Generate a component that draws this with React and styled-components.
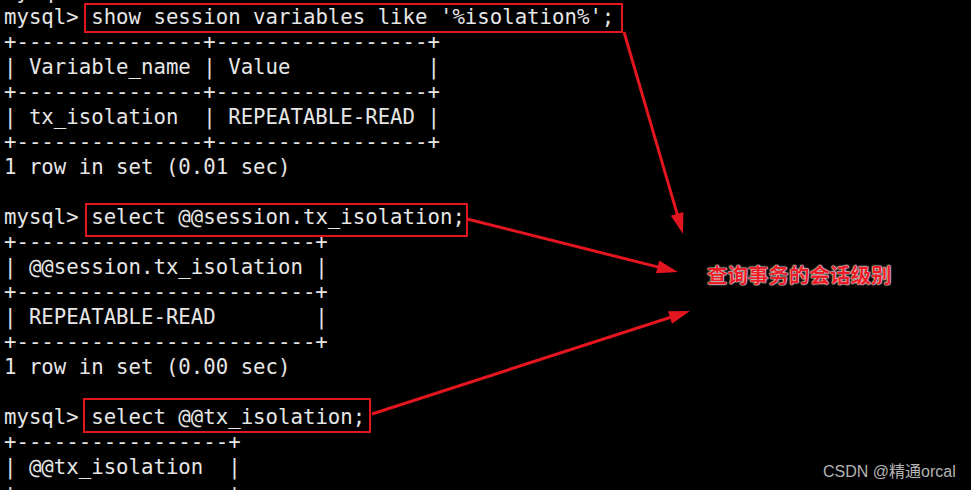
import React from 'react';
import styled, { createGlobalStyle } from 'styled-components';

const Global = createGlobalStyle`
  html, body {
    margin: 0;
    padding: 0;
    background: #000;
  }
`;

const Screen = styled.div`
  position: relative;
  width: 971px;
  height: 490px;
  overflow: hidden;
  background: #000;
`;

const Terminal = styled.div`
  margin-top: -20px;
  padding-left: 4px;
  font-family: 'DejaVu Sans Mono', 'Liberation Mono', monospace;
  font-size: 20.7px;
  line-height: 25px;
  color: #e6e6e6;
`;

const Line = styled.div`
  height: 25px;
  white-space: pre;
`;

const Cmd = styled.span`
  position: relative;
  display: inline-block;
  height: 25px;
  vertical-align: top;
  &::after {
    content: '';
    position: absolute;
    top: ${p => p.$box.t}px;
    right: ${p => p.$box.r}px;
    bottom: ${p => p.$box.b}px;
    left: ${p => p.$box.l}px;
    border: 2.5px solid #e3161f;
  }
`;

const Arrows = styled.svg`
  position: absolute;
  left: 0;
  top: 0;
  pointer-events: none;
`;

const Label = styled.div`
  position: absolute;
  left: 707px;
  top: 264px;
  font-family: 'Noto Sans CJK SC', sans-serif;
  font-weight: 700;
  font-size: 20.5px;
  line-height: 1;
  color: #ee1c26;
  text-shadow: 0 0 1px #fff, 0 0 1.5px #fff, 0 0 2px rgba(255, 255, 255, 0.8);
`;

const Watermark = styled.div`
  position: absolute;
  left: 823px;
  top: 462px;
  font-family: 'Liberation Sans', 'Noto Sans CJK SC', sans-serif;
  font-size: 16px;
  line-height: 20px;
  color: #b4b4b4;
  white-space: nowrap;
`;

const lines = [
  { text: 'mysql> ' },
  { text: 'mysql> ', cmd: "show session variables like '%isolation%';", box: { t: -2, r: -9, b: -3, l: -7 } },
  { text: '+---------------+-----------------+' },
  { text: '| Variable_name | Value           |' },
  { text: '+---------------+-----------------+' },
  { text: '| tx_isolation  | REPEATABLE-READ |' },
  { text: '+---------------+-----------------+' },
  { text: '1 row in set (0.01 sec)' },
  { text: '' },
  { text: 'mysql> ', cmd: 'select @@session.tx_isolation;', box: { t: -2, r: -3, b: -7, l: -6 } },
  { text: '+------------------------+' },
  { text: '| @@session.tx_isolation |' },
  { text: '+------------------------+' },
  { text: '| REPEATABLE-READ        |' },
  { text: '+------------------------+' },
  { text: '1 row in set (0.00 sec)' },
  { text: '' },
  { text: 'mysql> ', cmd: 'select @@tx_isolation;', box: { t: -7, r: -6, b: -3, l: -8 } },
  { text: '+-----------------+' },
  { text: '| @@tx_isolation  |' },
  { text: '+-----------------+' },
];

const arrows = [
  [624, 32, 683, 234],
  [467, 219, 678, 272],
  [372, 414, 690, 311],
];

function Arrow({ from, to }) {
  const [x1, y1] = from;
  const [x2, y2] = to;
  const len = Math.hypot(x2 - x1, y2 - y1);
  const ux = (x2 - x1) / len;
  const uy = (y2 - y1) / len;
  const head = 21;
  const half = 6.5;
  const bx = x2 - ux * head;
  const by = y2 - uy * head;
  const nx = -uy * half;
  const ny = ux * half;
  const points = `${x2},${y2} ${bx + nx},${by + ny} ${bx - nx},${by - ny}`;
  return (
    <g>
      <line x1={x1} y1={y1} x2={bx + ux * 4} y2={by + uy * 4} stroke="#e3161f" strokeWidth="3" />
      <polygon points={points} fill="#e3161f" />
    </g>
  );
}

export default function App() {
  return (
    <Screen>
      <Global />
      <Terminal>
        {lines.map((l, i) => (
          <Line key={i}>
            {l.text}
            {l.cmd && <Cmd $box={l.box}>{l.cmd}</Cmd>}
          </Line>
        ))}
      </Terminal>
      <Arrows width="971" height="490" viewBox="0 0 971 490">
        {arrows.map(([a, b, c, d], i) => (
          <Arrow key={i} from={[a, b]} to={[c, d]} />
        ))}
      </Arrows>
      <Label>查询事务的会话级别</Label>
      <Watermark>CSDN @精通orcal</Watermark>
    </Screen>
  );
}
